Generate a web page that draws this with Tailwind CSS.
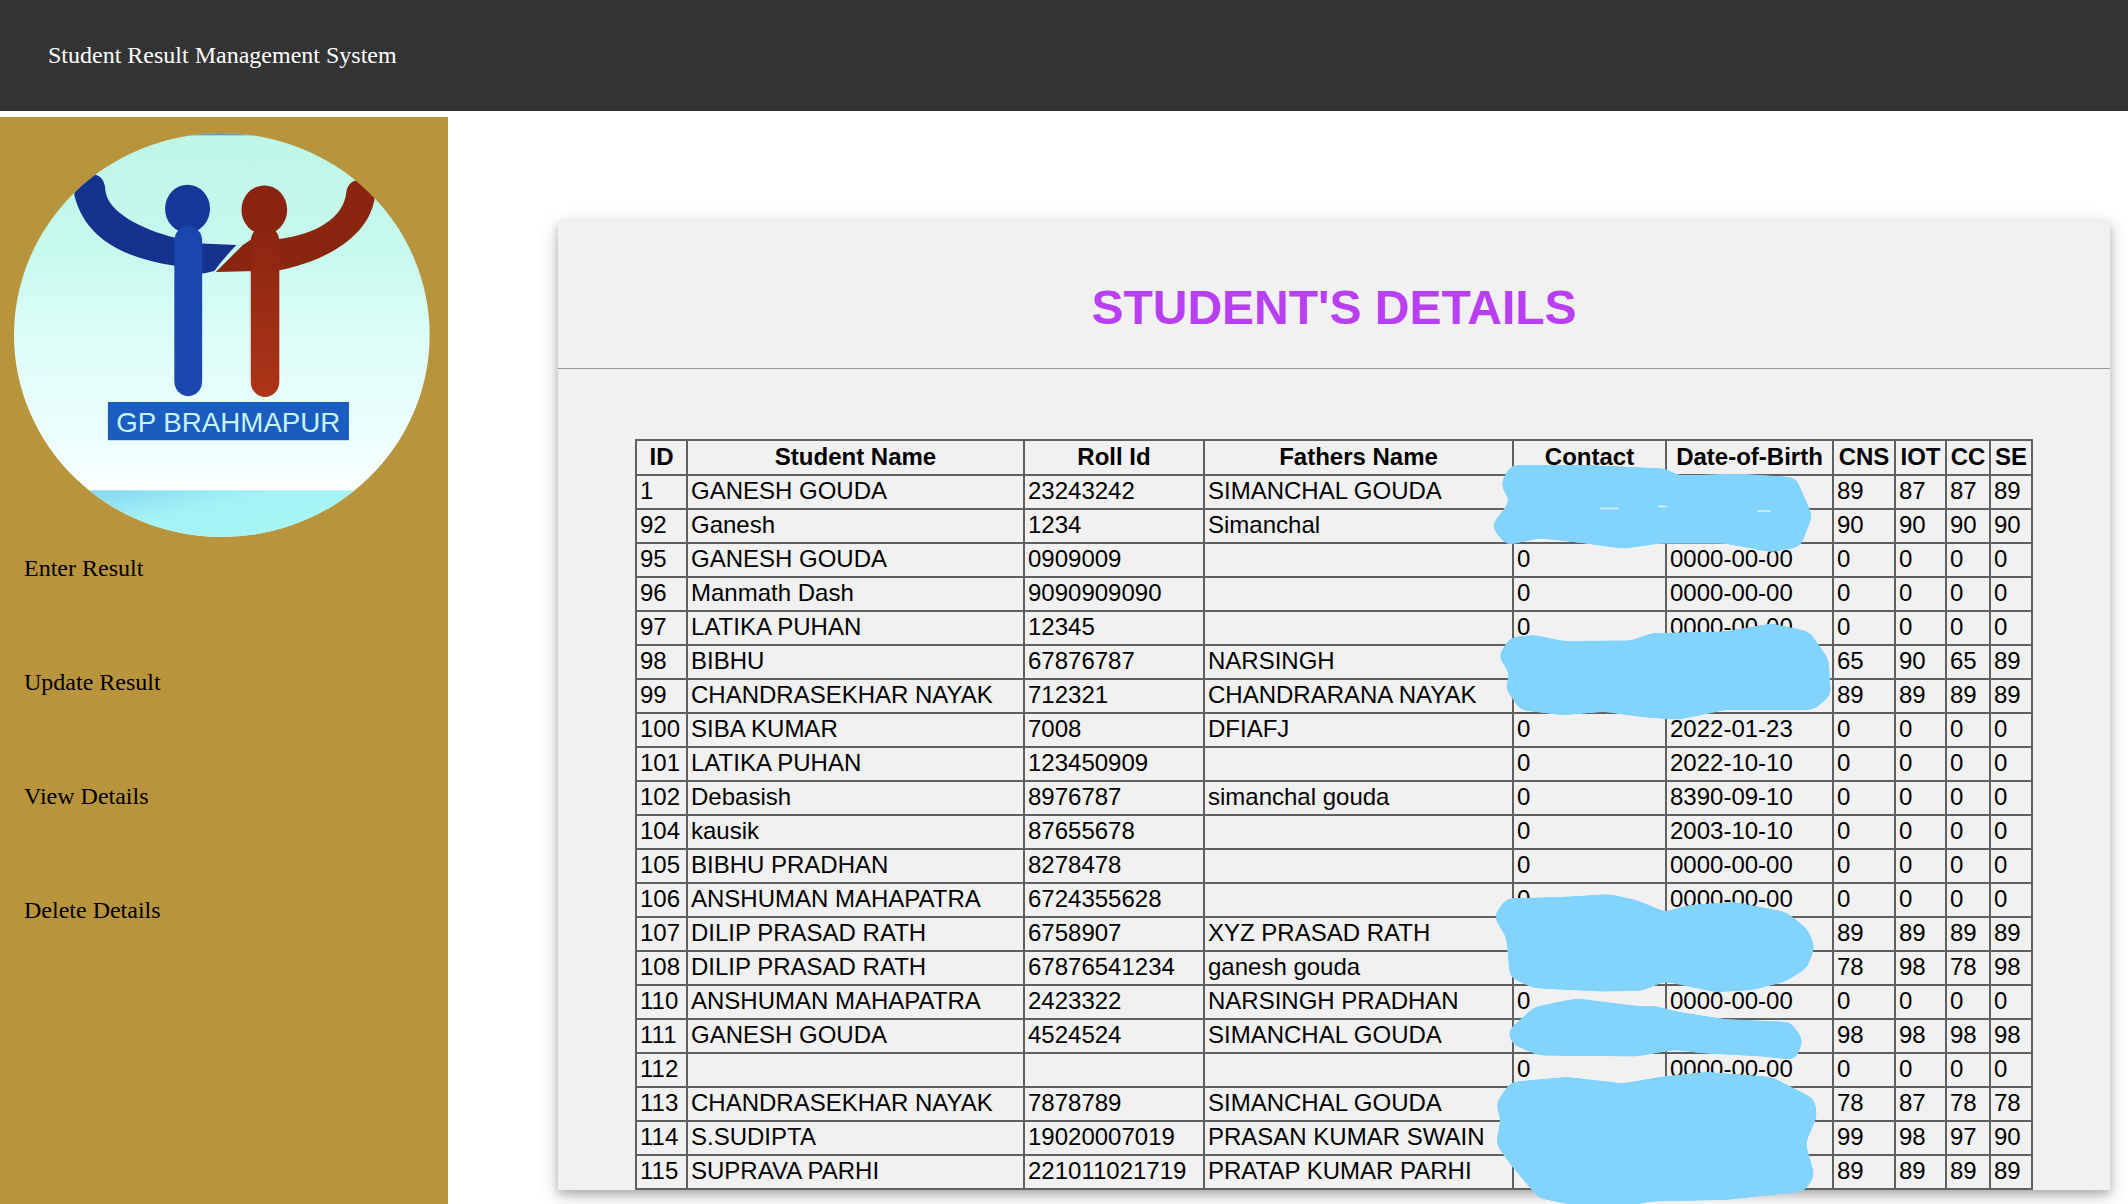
<!DOCTYPE html>
<html lang="en">
<head>
<meta charset="utf-8">
<title>Student Result Management System</title>
<script src="https://cdn.jsdelivr.net/npm/@tailwindcss/browser@4"></script>
</head>
<body class="relative h-[1204px] overflow-hidden bg-white font-['Liberation_Serif',serif] text-black">
<header class="flex h-[111px] items-center bg-[#333333] pb-[2px] pl-[48px] text-[24px] text-white">Student Result Management System</header>
<div class="flex">
  <aside class="mt-[6px] flex h-[1087px] w-[448px] shrink-0 flex-col bg-[#b8943d]">
    <svg class="ml-[14px] mt-[16px] h-[404px] w-[416px]" viewBox="39 347 1165 1056" preserveAspectRatio="none" aria-label="GP Brahmapur logo">
      <defs>
        <linearGradient id="sky" x1="0" y1="0" x2="0" y2="1">
          <stop offset="0" stop-color="#bdf6e6"/>
          <stop offset="0.3" stop-color="#c8f9ee"/>
          <stop offset="0.5" stop-color="#dcfdf9"/>
          <stop offset="0.8" stop-color="#f0ffff"/>
          <stop offset="0.88" stop-color="#fbffff"/>
        </linearGradient>
        <linearGradient id="band" x1="0" y1="0" x2="1" y2="0.5">
          <stop offset="0.1" stop-color="#7fd2f0"/>
          <stop offset="0.5" stop-color="#a4f2f6"/>
          <stop offset="1" stop-color="#a8f6f2"/>
        </linearGradient>
        <linearGradient id="red" x1="0" y1="0" x2="0" y2="1">
          <stop offset="0" stop-color="#8a2410"/>
          <stop offset="1" stop-color="#ad3518"/>
        </linearGradient>
        <clipPath id="disc"><ellipse cx="621" cy="875" rx="582" ry="528"/></clipPath>
      </defs>
      <g clip-path="url(#disc)">
        <rect x="39" y="347" width="1165" height="1056" fill="url(#sky)"/>
        <rect x="500" y="347" width="250" height="6" fill="#6e9aa0"/>
        <rect x="39" y="1281" width="1165" height="122" fill="url(#band)"/>
        <path d="M208 510 C208 475 235 454 258 454 C287 456 295 480 295 498 C302 555 400 600 488 620 L566 636 L662 640 Q625 675 600 708 L570 714 L490 694 C350 675 238 625 208 510 Z" fill="#14338f"/>
        <circle cx="525" cy="545" r="63" fill="#15389a"/>
        <rect x="488" y="590" width="78" height="445" rx="39" fill="#1a47ad"/>
        <path d="M604 710 L680 640 L704 625 L782 624 C880 612 963 572 970 500 C973 480 990 470 1005 470 C1030 476 1050 495 1050 512 C1037 612 920 680 782 706 Z" fill="#8a2610"/>
        <circle cx="740" cy="548" r="64" fill="#8a2410"/>
        <rect x="702" y="590" width="80" height="447" rx="40" fill="url(#red)"/>
        <rect x="302" y="1050" width="675" height="100" fill="#1a5cbf"/>
        <text x="325" y="1128" font-family="Liberation Sans, Arial, sans-serif" font-size="74" fill="#c9f2f0" textLength="628" lengthAdjust="spacingAndGlyphs">GP BRAHMAPUR</text>
      </g>
    </svg>
    <nav class="ml-[24px] mt-[17px] flex flex-col gap-[86px] text-[24px] leading-[28px]">
      <a>Enter Result</a>
      <a>Update Result</a>
      <a>View Details</a>
      <a>Delete Details</a>
    </nav>
  </aside>
  <main class="ml-[110px] mt-[110px] h-[969px] w-[1552px] shrink-0 bg-[#f1f1f1] font-['Liberation_Sans',Arial,sans-serif] shadow-[0_4px_8px_0_rgba(0,0,0,0.2),0_6px_20px_0_rgba(0,0,0,0.19)]">
    <div class="flex h-[148px] items-center justify-center border-b border-[#9a9a9a] pt-[27px]">
      <h1 class="text-[48px] font-bold leading-none text-[#b93ff5]">STUDENT'S DETAILS</h1>
    </div>
    <div class="ml-[77px] mt-[70px]">
      <table class="w-[1396px] table-fixed border-separate border-spacing-0 border border-[#606060] text-[24px] leading-[28px] [&_td]:h-[34px] [&_td]:border [&_td]:border-[#606060] [&_td]:px-[3px] [&_td]:pt-0 [&_td]:pb-[2px] [&_th]:h-[35px] [&_th]:border [&_th]:border-[#606060] [&_th]:p-0 [&_th]:pb-[2px] [&_th]:text-center [&_th]:font-bold">
        <colgroup>
          <col class="w-[51px]"><col class="w-[337px]"><col class="w-[180px]"><col class="w-[309px]"><col class="w-[153px]"><col class="w-[167px]"><col class="w-[62px]"><col class="w-[51px]"><col class="w-[44px]"><col class="w-[42px]">
        </colgroup>
        <thead><tr><th>ID</th><th>Student Name</th><th>Roll Id</th><th>Fathers Name</th><th>Contact</th><th>Date-of-Birth</th><th>CNS</th><th>IOT</th><th>CC</th><th>SE</th></tr></thead>
        <tbody>
          <tr><td>1</td><td>GANESH GOUDA</td><td>23243242</td><td>SIMANCHAL GOUDA</td><td></td><td></td><td>89</td><td>87</td><td>87</td><td>89</td></tr>
          <tr><td>92</td><td>Ganesh</td><td>1234</td><td>Simanchal</td><td></td><td></td><td>90</td><td>90</td><td>90</td><td>90</td></tr>
          <tr><td>95</td><td>GANESH GOUDA</td><td>0909009</td><td></td><td>0</td><td>0000-00-00</td><td>0</td><td>0</td><td>0</td><td>0</td></tr>
          <tr><td>96</td><td>Manmath Dash</td><td>9090909090</td><td></td><td>0</td><td>0000-00-00</td><td>0</td><td>0</td><td>0</td><td>0</td></tr>
          <tr><td>97</td><td>LATIKA PUHAN</td><td>12345</td><td></td><td>0</td><td>0000-00-00</td><td>0</td><td>0</td><td>0</td><td>0</td></tr>
          <tr><td>98</td><td>BIBHU</td><td>67876787</td><td>NARSINGH</td><td></td><td></td><td>65</td><td>90</td><td>65</td><td>89</td></tr>
          <tr><td>99</td><td>CHANDRASEKHAR NAYAK</td><td>712321</td><td>CHANDRARANA NAYAK</td><td></td><td></td><td>89</td><td>89</td><td>89</td><td>89</td></tr>
          <tr><td>100</td><td>SIBA KUMAR</td><td>7008</td><td>DFIAFJ</td><td>0</td><td>2022-01-23</td><td>0</td><td>0</td><td>0</td><td>0</td></tr>
          <tr><td>101</td><td>LATIKA PUHAN</td><td>123450909</td><td></td><td>0</td><td>2022-10-10</td><td>0</td><td>0</td><td>0</td><td>0</td></tr>
          <tr><td>102</td><td>Debasish</td><td>8976787</td><td>simanchal gouda</td><td>0</td><td>8390-09-10</td><td>0</td><td>0</td><td>0</td><td>0</td></tr>
          <tr><td>104</td><td>kausik</td><td>87655678</td><td></td><td>0</td><td>2003-10-10</td><td>0</td><td>0</td><td>0</td><td>0</td></tr>
          <tr><td>105</td><td>BIBHU PRADHAN</td><td>8278478</td><td></td><td>0</td><td>0000-00-00</td><td>0</td><td>0</td><td>0</td><td>0</td></tr>
          <tr><td>106</td><td>ANSHUMAN MAHAPATRA</td><td>6724355628</td><td></td><td>0</td><td>0000-00-00</td><td>0</td><td>0</td><td>0</td><td>0</td></tr>
          <tr><td>107</td><td>DILIP PRASAD RATH</td><td>6758907</td><td>XYZ PRASAD RATH</td><td></td><td></td><td>89</td><td>89</td><td>89</td><td>89</td></tr>
          <tr><td>108</td><td>DILIP PRASAD RATH</td><td>67876541234</td><td>ganesh gouda</td><td></td><td></td><td>78</td><td>98</td><td>78</td><td>98</td></tr>
          <tr><td>110</td><td>ANSHUMAN MAHAPATRA</td><td>2423322</td><td>NARSINGH PRADHAN</td><td>0</td><td>0000-00-00</td><td>0</td><td>0</td><td>0</td><td>0</td></tr>
          <tr><td>111</td><td>GANESH GOUDA</td><td>4524524</td><td>SIMANCHAL GOUDA</td><td></td><td></td><td>98</td><td>98</td><td>98</td><td>98</td></tr>
          <tr><td>112</td><td></td><td></td><td></td><td>0</td><td>0000-00-00</td><td>0</td><td>0</td><td>0</td><td>0</td></tr>
          <tr><td>113</td><td>CHANDRASEKHAR NAYAK</td><td>7878789</td><td>SIMANCHAL GOUDA</td><td></td><td></td><td>78</td><td>87</td><td>78</td><td>78</td></tr>
          <tr><td>114</td><td>S.SUDIPTA</td><td>19020007019</td><td>PRASAN KUMAR SWAIN</td><td></td><td></td><td>99</td><td>98</td><td>97</td><td>90</td></tr>
          <tr><td>115</td><td>SUPRAVA PARHI</td><td>221011021719</td><td>PRATAP KUMAR PARHI</td><td></td><td></td><td>89</td><td>89</td><td>89</td><td>89</td></tr>
        </tbody>
      </table>
    </div>
  </main>
</div>
<svg class="pointer-events-none absolute left-0 top-0 h-[1204px] w-[2128px]" viewBox="0 0 2128 1204" aria-hidden="true">
  <defs>
    <filter id="soft" x="-10%" y="-10%" width="120%" height="120%" color-interpolation-filters="sRGB">
      <feGaussianBlur stdDeviation="4"/>
      <feColorMatrix type="matrix" values="0 0 0 0 0.51  0 0 0 0 0.83  0 0 0 0 1  0 0 0 18 -6"/>
    </filter>
  </defs>
  <g filter="url(#soft)" fill="#82d4ff">
    <g transform="translate(1400 200) scale(0.4643 0.3507)">
      <polygon points="220,810 240,760 400,760 570,770 600,790 730,785 850,795 885,900 860,985 800,1000 700,975 560,975 480,990 400,975 300,960 230,980 200,930 240,860"/>
      <polygon points="215,1300 240,1250 290,1245 350,1262 500,1260 540,1240 700,1235 800,1212 880,1235 920,1310 925,1410 890,1450 700,1450 600,1478 520,1470 440,1455 350,1465 260,1450 230,1390 240,1350"/>
    </g>
    <g transform="translate(1400 750) scale(0.4643 0.3333)">
      <polygon points="205,500 230,450 350,445 450,437 510,455 570,490 620,470 720,460 830,490 875,540 890,590 875,650 830,690 760,715 680,722 570,690 520,718 430,720 290,710 240,680 232,560"/>
      <polygon points="235,845 290,775 380,750 510,772 550,772 600,790 700,812 840,820 865,870 850,925 780,915 650,905 590,895 510,915 300,912 245,880"/>
      <polygon points="210,1060 240,1000 360,985 480,1005 560,985 660,970 800,985 890,1050 895,1100 885,1130 870,1180 880,1230 890,1275 870,1320 700,1345 540,1350 440,1380 300,1340 240,1240 210,1180 220,1110"/>
    </g>
  </g>
  <path d="M1600 508.5H1618M1658 506.5H1667M1757 511H1771" stroke="#dfeef5" stroke-width="1.5" fill="none"/>
</svg>
</body>
</html>
